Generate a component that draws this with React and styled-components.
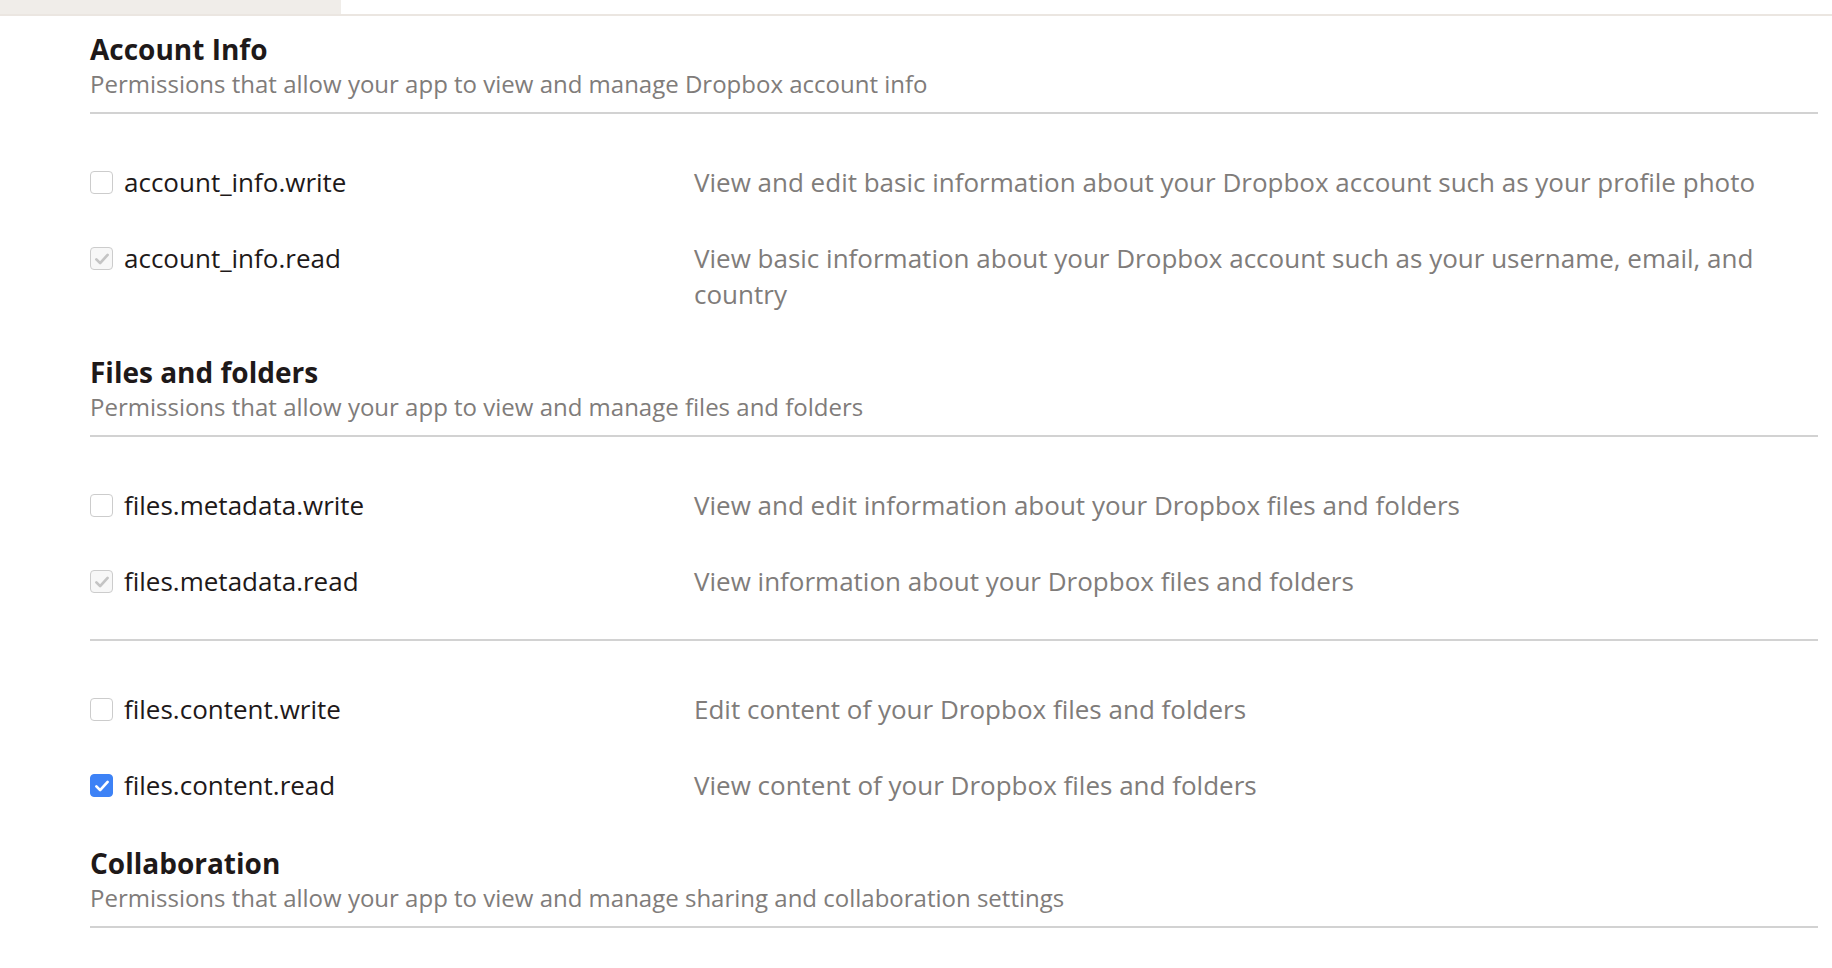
import React from 'react';
import styled, { createGlobalStyle } from 'styled-components';

const GlobalStyle = createGlobalStyle`
  body {
    margin: 0;
    background: #fff;
    font-family: "Open Sans", "Liberation Sans", sans-serif;
    color: #1e1919;
  }
`;

const sections = [
  {
    title: 'Account Info',
    subtitle: 'Permissions that allow your app to view and manage Dropbox account info',
    groups: [
      [
        { scope: 'account_info.write', state: 'off', text: 'View and edit basic information about your Dropbox account such as your profile photo' },
        { scope: 'account_info.read', state: 'locked', text: 'View basic information about your Dropbox account such as your username, email, and country' },
      ],
    ],
  },
  {
    title: 'Files and folders',
    subtitle: 'Permissions that allow your app to view and manage files and folders',
    groups: [
      [
        { scope: 'files.metadata.write', state: 'off', text: 'View and edit information about your Dropbox files and folders' },
        { scope: 'files.metadata.read', state: 'locked', text: 'View information about your Dropbox files and folders' },
      ],
      [
        { scope: 'files.content.write', state: 'off', text: 'Edit content of your Dropbox files and folders' },
        { scope: 'files.content.read', state: 'on', text: 'View content of your Dropbox files and folders' },
      ],
    ],
  },
  {
    title: 'Collaboration',
    subtitle: 'Permissions that allow your app to view and manage sharing and collaboration settings',
    groups: [],
  },
];

const Check = ({ state }) => (
  <Box $state={state}>
    {state !== 'off' && (
      <svg width="18" height="18" viewBox="0 0 24 24" fill="none">
        <path
          d="M4.5 12.5l5 5L19.5 6.5"
          stroke={state === 'on' ? '#fff' : '#c4c4c4'}
          strokeWidth="3.6"
          strokeLinecap="round"
          strokeLinejoin="round"
        />
      </svg>
    )}
  </Box>
);

export default function App() {
  return (
    <>
      <GlobalStyle />
      <TopStrip>
        <Tab />
      </TopStrip>
      <Page>
        {sections.map((s) => (
          <Section key={s.title}>
            <Title>{s.title}</Title>
            <Subtitle>{s.subtitle}</Subtitle>
            <Rule />
            {s.groups.map((g, gi) => (
              <React.Fragment key={gi}>
                {gi > 0 && <Rule />}
                <Group>
                  {g.map((p) => (
                    <Row key={p.scope}>
                      <Scope>
                        <Check state={p.state} />
                        <span>{p.scope}</span>
                      </Scope>
                      <Desc>{p.text}</Desc>
                    </Row>
                  ))}
                </Group>
              </React.Fragment>
            ))}
          </Section>
        ))}
      </Page>
    </>
  );
}

const TopStrip = styled.div`
  height: 14px;
  border-bottom: 2px solid #ebe6e1;
`;

const Tab = styled.div`
  width: 341px;
  height: 14px;
  background: #f0ede9;
`;

const Page = styled.div`
  padding: 16px 14px 0 90px;
`;

const Section = styled.section`
  & + & {
    margin-top: 3px;
  }
`;

const Title = styled.h2`
  margin: 0;
  font-size: 28px;
  line-height: 34px;
  font-weight: 700;
  color: #1e1919;
`;

const Subtitle = styled.p`
  margin: 0 0 10px;
  font-size: 24px;
  line-height: 36px;
  color: #807c7a;
`;

const Rule = styled.hr`
  margin: 0;
  border: 0;
  height: 2px;
  background: #d2d2d2;
`;

const Group = styled.div`
  padding: 30px 0 20px;
`;

const Row = styled.div`
  display: grid;
  grid-template-columns: 604px 1fr;
  padding: 20px 0;
  font-size: 26px;
  line-height: 36px;
`;

const Scope = styled.div`
  display: flex;
  align-items: flex-start;
  gap: 11px;
  color: #1e1919;
`;

const Box = styled.span`
  flex: none;
  box-sizing: border-box;
  width: 23px;
  height: 23px;
  margin-top: 7px;
  border-radius: 4px;
  display: flex;
  align-items: center;
  justify-content: center;
  border: 1.5px solid ${(p) => (p.$state === 'on' ? '#3d82f6' : '#cccccc')};
  background: ${(p) => {
    if (p.$state === 'on') return '#3d82f6';
    if (p.$state === 'locked') return '#f7f7f7';
    return '#fff';
  }};
`;

const Desc = styled.div`
  color: #807c7a;
`;
